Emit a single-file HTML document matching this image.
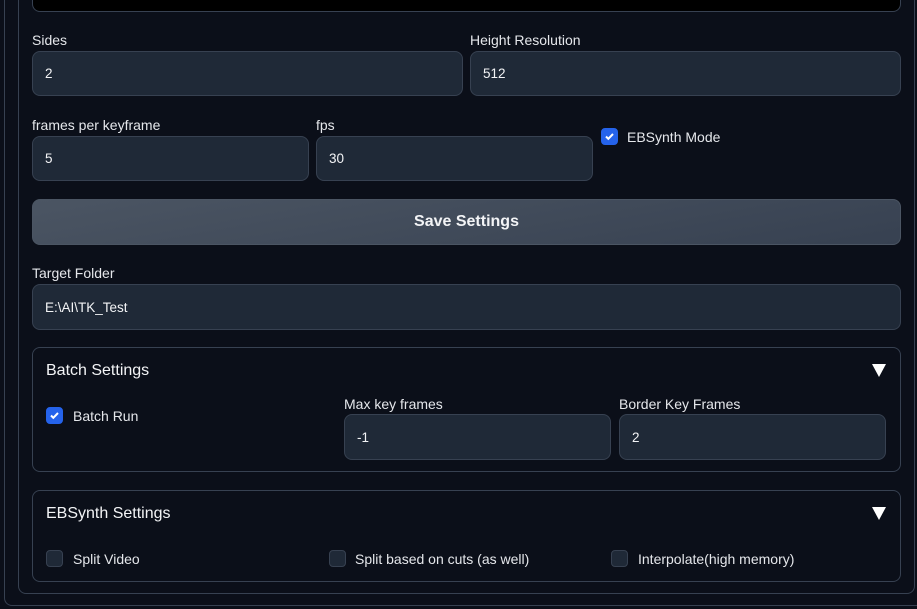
<!DOCTYPE html>
<html><head><style>
*{box-sizing:border-box;margin:0;padding:0}
body{width:917px;height:609px;background:#0b0f19;font-family:"Liberation Sans",sans-serif;color:#e5e7eb;position:relative;overflow:hidden;font-size:14px}
.a{position:absolute}
.inp{position:absolute;background:#1f2937;border:1px solid #374151;border-radius:8px;padding-left:12px;display:flex;align-items:center;font-size:13.5px;color:#f3f4f6}
.lbl{position:absolute;font-size:14px;color:#e5e7eb;line-height:16px}
.box{position:absolute;border:1px solid #374151;border-radius:8px}
.cb{position:absolute;width:17px;height:17px;border-radius:4px;background:#2563eb;border:1px solid #2563eb}
.cb svg{position:absolute;left:2px;top:2px}
.cbo{position:absolute;width:17px;height:17px;border-radius:4px;background:#1f2937;border:1px solid #374151}
.tri{position:absolute;width:0;height:0;border-left:7px solid transparent;border-right:7px solid transparent;border-top:13px solid #fff}
</style></head><body>
<div class="a" style="left:4px;top:-20px;width:930px;height:626px;border:1px solid #374151;border-radius:8px"></div>
<div class="a" style="left:18px;top:-20px;width:897px;height:614px;border:1px solid #374151;border-radius:8px"></div>
<div class="a" style="left:32px;top:-30px;width:869px;height:42px;background:#000;border:1px solid #374151;border-radius:8px"></div>

<div class="lbl" style="left:32px;top:32px">Sides</div>
<div class="inp" style="left:32px;top:51px;width:431px;height:45px">2</div>
<div class="lbl" style="left:470px;top:32px">Height Resolution</div>
<div class="inp" style="left:470px;top:51px;width:431px;height:45px">512</div>

<div class="lbl" style="left:32px;top:117px">frames per keyframe</div>
<div class="inp" style="left:32px;top:136px;width:277px;height:45px">5</div>
<div class="lbl" style="left:316px;top:117px">fps</div>
<div class="inp" style="left:316px;top:136px;width:277px;height:45px">30</div>
<div class="cb" style="left:601px;top:128px"><svg width="11" height="11" viewBox="0 0 11 11"><path d="M2 5.5l2.3 2.3L9 3" stroke="#fff" stroke-width="2" fill="none"/></svg></div>
<div class="lbl" style="left:627px;top:129px">EBSynth Mode</div>

<div class="a" style="left:32px;top:199px;width:869px;height:46px;border-radius:8px;background:linear-gradient(170deg,#4b5563,#374151);border:1px solid #4b5563;display:flex;align-items:center;justify-content:center;font-weight:bold;font-size:16px;color:#f3f4f6">Save Settings</div>

<div class="lbl" style="left:32px;top:265px">Target Folder</div>
<div class="inp" style="left:32px;top:284px;width:869px;height:46px">E:\AI\TK_Test</div>

<div class="box" style="left:32px;top:347px;width:869px;height:125px"></div>
<div class="a" style="left:46px;top:362px;font-size:16px;color:#f3f4f6">Batch Settings</div>
<div class="tri" style="left:872px;top:364px"></div>
<div class="cb" style="left:46px;top:407px"><svg width="11" height="11" viewBox="0 0 11 11"><path d="M2 5.5l2.3 2.3L9 3" stroke="#fff" stroke-width="2" fill="none"/></svg></div>
<div class="lbl" style="left:73px;top:408px">Batch Run</div>
<div class="lbl" style="left:344px;top:396px">Max key frames</div>
<div class="inp" style="left:344px;top:414px;width:267px;height:46px">-1</div>
<div class="lbl" style="left:619px;top:396px">Border Key Frames</div>
<div class="inp" style="left:619px;top:414px;width:267px;height:46px">2</div>

<div class="box" style="left:32px;top:490px;width:869px;height:92px"></div>
<div class="a" style="left:46px;top:505px;font-size:16px;color:#f3f4f6">EBSynth Settings</div>
<div class="tri" style="left:872px;top:507px"></div>
<div class="cbo" style="left:46px;top:550px"></div>
<div class="lbl" style="left:73px;top:551px">Split Video</div>
<div class="cbo" style="left:329px;top:550px"></div>
<div class="lbl" style="left:355px;top:551px">Split based on cuts (as well)</div>
<div class="cbo" style="left:611px;top:550px"></div>
<div class="lbl" style="left:638px;top:551px">Interpolate(high memory)</div>
</body></html>
